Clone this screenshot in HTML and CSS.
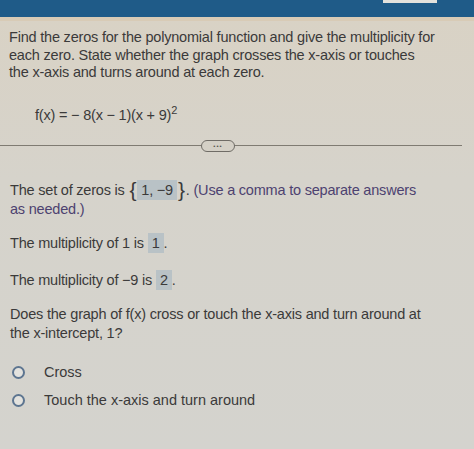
FILE: index.html
```html
<!DOCTYPE html>
<html lang="en">
<head>
  <meta charset="UTF-8">
  <meta name="viewport" content="width=device-width, initial-scale=1.0">
  <title>Polynomial Zeros</title>
  <link rel="stylesheet" href="styles.css">
</head>
<body>

<div class="topbar">
  <div class="tab"></div>
</div>

<div class="question">
  <p class="prompt">Find the zeros for the polynomial function and give the multiplicity for each zero. State whether the graph crosses the x-axis or touches the x-axis and turns around at each zero.</p>
  <p class="formula">f(x) = &minus; 8(x &minus; 1)(x + 9)<sup>2</sup></p>
</div>

<div class="divider">
  <span class="more">&bull;&bull;&bull;</span>
</div>

<div class="answers">
  <p class="zeros">The set of zeros is <span class="brace">{</span><span class="box">1, &minus;9</span><span class="brace">}</span>. <span class="hint">(Use a comma to separate answers as needed.)</span></p>
  <p class="mult-one">The multiplicity of 1 is <span class="box">1</span>.</p>
  <p>The multiplicity of &minus;9 is <span class="box">2</span>.</p>
  <p>Does the graph of f(x) cross or touch the x-axis and turn around at the x-intercept, 1?</p>

  <div class="options">
    <label class="option"><span class="radio"></span>Cross</label>
    <label class="option"><span class="radio"></span>Touch the x-axis and turn around</label>
  </div>
</div>

</body>
</html>
```

FILE: styles.css
```css
body {
  margin: 0;
  font-family: "Liberation Sans", Arial, sans-serif;
  font-size: 14.5px;
  color: #3b3a3a;
  background: linear-gradient(to bottom, #d9d2c4, #d6d3cb 40%, #d4d3ce);
  height: 449px;
  overflow: hidden;
}
p {
  margin: 0;
}
.topbar {
  height: 17px;
  background: #1f5b88;
  border-bottom: 4px solid #d8cbb6;
  position: relative;
}
.tab {
  position: absolute;
  left: 383px;
  top: 0;
  width: 54px;
  height: 3px;
  background: #e4e2dc;
}
.question {
  padding: 8px 9px 0 9px;
}
.prompt {
  width: 428px;
  line-height: 17.5px;
  letter-spacing: -0.2px;
}
.formula {
  margin: 22px 0 0 26px;
  letter-spacing: -0.2px;
}
.formula sup {
  font-size: 11px;
}
.divider {
  margin: 23px 12px 0 0;
  height: 1px;
  background: #7f7b72;
  display: flex;
  justify-content: center;
  align-items: center;
}
.more {
  margin-left: -26px;
  width: 32px;
  height: 10px;
  border: 1px solid #6f6c66;
  border-radius: 6px;
  background: #d4d0c6;
  font-size: 6px;
  color: #55534f;
  line-height: 10px;
  text-align: center;
  letter-spacing: 1px;
}
.answers {
  padding: 35px 10px 0 10px;
  width: 418px;
}
.answers p {
  line-height: 19px;
  letter-spacing: -0.2px;
  margin-bottom: 15px;
}
.answers .mult-one {
  margin-bottom: 18px;
}
.brace {
  font-size: 21px;
  line-height: 18px;
  vertical-align: -2px;
  margin: 0 1px;
}
.box {
  background: #b9c2c6;
  padding: 2px 4px;
}
.hint {
  color: #4d4270;
}
.options {
  display: flex;
  flex-direction: column;
  gap: 12px;
  margin-top: 21px;
}
.option {
  display: flex;
  align-items: center;
  gap: 19px;
  padding-left: 2px;
}
.radio {
  width: 9px;
  height: 9px;
  border: 2px solid #5d7590;
  border-radius: 50%;
  background: #e3e2de;
}
```
